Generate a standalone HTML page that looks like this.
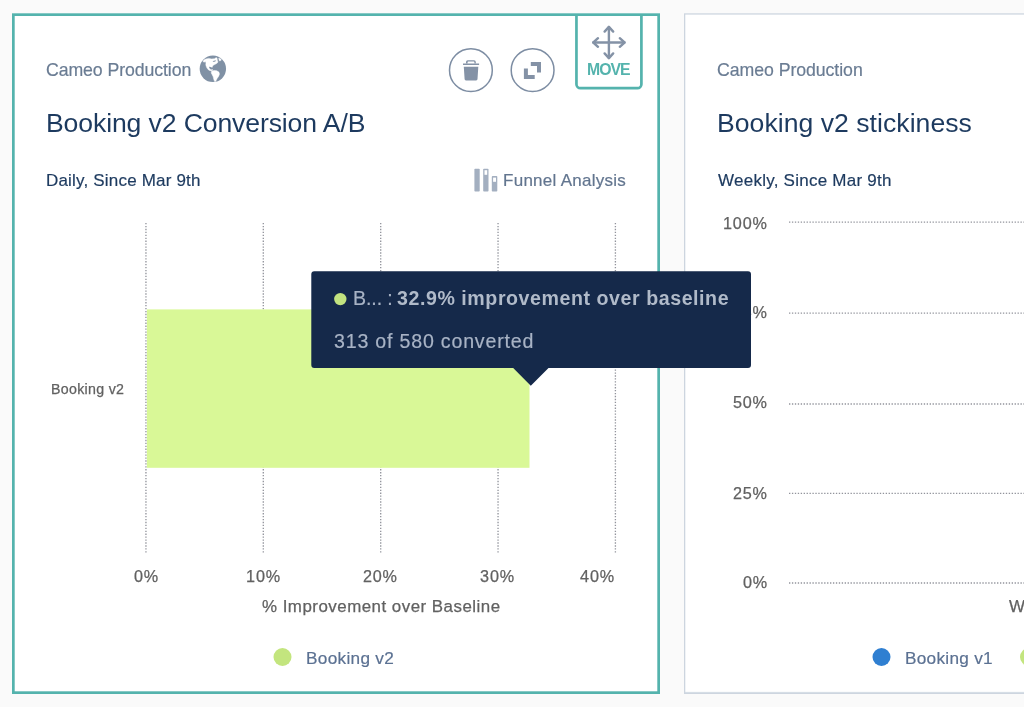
<!DOCTYPE html>
<html><head><meta charset="utf-8">
<style>
html,body{margin:0;padding:0;}
body{width:1024px;height:707px;overflow:hidden;background:#fafafa;position:relative;font-family:"Liberation Sans",sans-serif;}
.abs{position:absolute;white-space:nowrap;line-height:1;will-change:transform;}
#card1{position:absolute;left:12px;top:13.3px;width:648px;height:680.7px;background:#fff;}
#card2{position:absolute;left:684px;top:13.3px;width:400px;height:680.5px;background:#fff;}
.slate{color:#66788f;}
.navy{color:#1d3a5f;}
.tick{color:#5f5f5f;}
.xt{font-size:16px;transform:translateX(-50%);}
.yt{font-size:16px;right:258px;}
</style></head><body>
<div id="card1"></div>
<div id="card2"></div>



<div class="abs" id="t_cameo1" style="left:45.51px;top:62.4px;font-size:17.7px;letter-spacing:-0.08px;color:#6a7c93;-webkit-text-stroke:0.2px #6a7c93;">Cameo Production</div>
<div class="abs" id="t_title1" style="left:45.91px;top:109.8px;font-size:26.6px;letter-spacing:-0.12px;color:#1d3a5f;">Booking v2 Conversion A/B</div>
<div class="abs" id="t_daily" style="left:46.21px;top:171.9px;font-size:17.0px;letter-spacing:0.19px;color:#1d3a5f;-webkit-text-stroke:0.2px #1d3a5f;">Daily, Since Mar 9th</div>
<div class="abs" id="t_funnel" style="left:503.11px;top:172px;font-size:17.0px;letter-spacing:0.27px;color:#62758f;-webkit-text-stroke:0.2px #62758f;">Funnel Analysis</div>
<div class="abs" id="t_cameo2" style="left:717.36px;top:62.3px;font-size:17.7px;letter-spacing:-0.05px;color:#6a7c93;-webkit-text-stroke:0.2px #6a7c93;">Cameo Production</div>
<div class="abs" id="t_title2" style="left:717.31px;top:109.8px;font-size:26.6px;letter-spacing:0.03px;color:#1d3a5f;">Booking v2 stickiness</div>
<div class="abs" id="t_weekly" style="left:717.9px;top:171.9px;font-size:17.0px;letter-spacing:0.25px;color:#1d3a5f;-webkit-text-stroke:0.2px #1d3a5f;">Weekly, Since Mar 9th</div>
<div class="abs" id="t_ylab" style="left:51.23px;top:382.06px;font-size:14.2px;letter-spacing:0.31px;color:#616161;-webkit-text-stroke:0.25px #616161;">Booking v2</div>
<div class="abs" id="t_x0" style="left:134.41px;top:568.23px;font-size:16.2px;letter-spacing:0.72px;color:#616161;-webkit-text-stroke:0.25px #616161;">0%</div>
<div class="abs" id="t_x1" style="left:245.98px;top:568.23px;font-size:16.2px;letter-spacing:0.93px;color:#616161;-webkit-text-stroke:0.25px #616161;">10%</div>
<div class="abs" id="t_x2" style="left:363.17px;top:568.23px;font-size:16.2px;letter-spacing:0.78px;color:#616161;-webkit-text-stroke:0.25px #616161;">20%</div>
<div class="abs" id="t_x3" style="left:480.07px;top:568.23px;font-size:16.2px;letter-spacing:0.93px;color:#616161;-webkit-text-stroke:0.25px #616161;">30%</div>
<div class="abs" id="t_x4" style="left:580.35px;top:568.23px;font-size:16.2px;letter-spacing:0.89px;color:#616161;-webkit-text-stroke:0.25px #616161;">40%</div>
<div class="abs" id="t_xtitle" style="left:261.91px;top:599.25px;font-size:16.9px;letter-spacing:0.49px;color:#616161;-webkit-text-stroke:0.25px #616161;">% Improvement over Baseline</div>
<div class="abs" id="t_leg1" style="left:306.29px;top:650.2px;font-size:17.2px;letter-spacing:0.31px;color:#5b7192;-webkit-text-stroke:0.2px #5b7192;">Booking v2</div>
<div class="abs" id="t_leg2" style="left:905.19px;top:650.4px;font-size:17.2px;letter-spacing:0.29px;color:#5b7192;-webkit-text-stroke:0.2px #5b7192;">Booking v1</div>
<div class="abs" id="t_y100" style="left:722.88px;top:214.73px;font-size:16.2px;letter-spacing:0.85px;color:#616161;-webkit-text-stroke:0.25px #616161;">100%</div>
<div class="abs" id="t_y75" style="left:732.88px;top:304.03px;font-size:16.2px;letter-spacing:0.78px;color:#616161;-webkit-text-stroke:0.25px #616161;">75%</div>
<div class="abs" id="t_y50" style="left:732.84px;top:393.53px;font-size:16.2px;letter-spacing:0.8px;color:#616161;-webkit-text-stroke:0.25px #616161;">50%</div>
<div class="abs" id="t_y25" style="left:732.87px;top:484.63px;font-size:16.2px;letter-spacing:0.78px;color:#616161;-webkit-text-stroke:0.25px #616161;">25%</div>
<div class="abs" id="t_y0" style="left:742.71px;top:574.03px;font-size:16.2px;letter-spacing:0.72px;color:#616161;-webkit-text-stroke:0.25px #616161;">0%</div>
<div class="abs" id="t_w" style="left:1009.01px;top:598.75px;font-size:16.9px;letter-spacing:0px;color:#616161;-webkit-text-stroke:0.25px #616161;">Weeks</div>
<svg id="gfx" class="abs" style="left:0;top:0" width="1024" height="707" viewBox="0 0 1024 707">
<!-- card borders -->
<rect x="684.65" y="13.95" width="400" height="679.4" fill="none" stroke="#cdd5df" stroke-width="1.3"/>
<path d="M685 692.4 H1024" stroke="#cdd5df" stroke-width="0.8" fill="none"/>
<!-- move tab -->
<path d="M576.45 14 V84.2 a4 4 0 0 0 4 4 H637.4 a4 4 0 0 0 4 -4 V14" fill="#fff" stroke="#54b3ad" stroke-width="2.7"/>
<rect x="13.35" y="14.65" width="645.3" height="678" fill="none" stroke="#54b3ad" stroke-width="2.7"/>
<!-- move icon -->
<g stroke="#8492a6" stroke-width="2.4" fill="none" stroke-linecap="round" stroke-linejoin="round">
<path d="M593.3 42.5 H624.5 M608.9 26.9 V58.1"/>
<path d="M604.6 31.6 L608.9 26.9 L613.2 31.6 M604.6 53.4 L608.9 58.1 L613.2 53.4 M598 38.2 L593.3 42.5 L598 46.8 M619.8 38.2 L624.5 42.5 L619.8 46.8"/>
</g>
<!-- trash button -->
<circle cx="470.9" cy="70.2" r="21.4" fill="#fff" stroke="#7d8da3" stroke-width="1.5"/>
<g fill="#8492a6">
<path d="M463.8 66.7 H478.3 L477.5 79 a1.4 1.4 0 0 1 -1.4 1.4 H466 a1.4 1.4 0 0 1 -1.4 -1.4 Z"/>
<rect x="463" y="63.5" width="16.1" height="1.5"/>
<path d="M466 63.5 V62 a1.8 1.8 0 0 1 1.8 -1.8 H474 a1.8 1.8 0 0 1 1.8 1.8 V63.5 H474.4 V62.2 a0.6 0.6 0 0 0 -0.6 -0.6 H468.2 a0.6 0.6 0 0 0 -0.6 0.6 V63.5 Z"/>
</g>
<!-- expand button -->
<circle cx="532.6" cy="70.2" r="21.4" fill="#fff" stroke="#7d8da3" stroke-width="1.5"/>
<g fill="#8492a6">
<path d="M530.8 61.9 H541 V72.6 H537 V66 H530.8 Z"/>
<path d="M523.9 68.5 H527.9 V74.9 H534.7 V79 H523.9 Z"/>
</g>
<!-- globe -->
<circle cx="212.85" cy="68.8" r="13.2" fill="#8091a5"/>
<g transform="translate(193 48) scale(0.056577)" fill="#fff" stroke="#fff" stroke-width="8" stroke-linejoin="round">
<path d="M178 240 L192 212 L225 196 L275 184 L330 193 L380 190 L410 170 L426 180 L430 215 L440 245 L430 265 L400 285 L365 300 L346 320 L340 345 L350 364 L330 360 L302 345 L286 354 L300 374 L325 386 L338 378 L352 388 L330 402 L300 400 L266 380 L242 346 L226 300 L229 262 L216 240 L196 250 Z"/>
<path d="M328 412 L370 396 L420 402 L458 426 L468 460 L454 500 L426 540 L402 588 L384 594 L368 558 L357 510 L337 470 L322 440 Z"/>
<path d="M454 180 L476 184 L502 208 L484 226 L468 228 L460 206 Z"/>
</g>
<path d="M212.6 61.2 q1.8 -1 3.6 -0.6 q-0.3 1 -1.8 1.2 q-1.2 0.2 -1.8 -0.6 Z" fill="#8091a5"/>
<path d="M208.9 66.9 q1.2 -0.5 2.2 0.3 q1 0.5 2.4 0.3 l0.2 1.3 q-1.8 0.6 -3 -0.1 q-1.2 -0.7 -1.8 -1.8 Z" fill="#8091a5"/>
<!-- funnel icon -->
<g fill="#a3afc0">
<rect x="474.4" y="168.7" width="5.3" height="22.9" rx="0.8"/>
<rect x="483.2" y="168.7" width="5.3" height="22.9" rx="0.8"/>
<rect x="491.8" y="176.1" width="5.5" height="15.5" rx="0.8"/>
</g>
<rect x="484.5" y="170.2" width="2.7" height="4.6" fill="#fff"/>
<rect x="493.1" y="177.6" width="2.9" height="4.2" fill="#fff"/>

<!-- chart 1 grid -->
<g stroke="#92949c" stroke-width="1.33" stroke-dasharray="1.33 1.6" fill="none">
<path d="M145.95 223 V553 M263.3 223 V553 M380.7 223 V553 M498.05 223 V553 M615.4 223 V553"/>
</g>
<rect x="146.9" y="309.4" width="382.6" height="158.4" fill="#d9f897"/>

<!-- legend dots -->
<circle cx="282.5" cy="657" r="9" fill="#c3e57e"/>
<circle cx="881.5" cy="657" r="9" fill="#2f7fd1"/>
<circle cx="1029" cy="657" r="9" fill="#c3e57e"/>

<!-- chart 2 grid -->
<g stroke="#92949c" stroke-width="1.33" stroke-dasharray="1.33 1.6" fill="none">
<path d="M789 222.1 H1024 M789 313.1 H1024 M789 404 H1024 M789 493.4 H1024 M789 583 H1024"/>
</g>

<!-- tooltip -->
<path d="M314.3 271.2 H748 a3 3 0 0 1 3 3 V364.9 a3 3 0 0 1 -3 3 H548.5 L530.8 385.7 L513.2 367.9 H314.3 a3 3 0 0 1 -3 -3 V274.2 a3 3 0 0 1 3 -3 Z" fill="#15294a"/>
<circle cx="340.3" cy="299.1" r="6.2" fill="#c2e380"/>
</svg>
<div class="abs" id="t_move" style="left:586.9px;top:61.6px;font-size:15.8px;letter-spacing:-0.98px;color:#54b3ad;font-weight:bold;">MOVE</div>
<div class="abs" id="t_tipa" style="left:352.52px;top:289.4px;font-size:19.6px;letter-spacing:-0.11px;color:#a8b3c5;-webkit-text-stroke:0.2px #a8b3c5;">B... :</div>
<div class="abs" id="t_tipb" style="left:396.67px;top:289.4px;font-size:19.6px;letter-spacing:0.56px;color:#b0bac9;font-weight:bold;">32.9% improvement over baseline</div>
<div class="abs" id="t_tip2" style="left:333.96px;top:331.5px;font-size:19.6px;letter-spacing:0.8px;color:#a8b3c5;-webkit-text-stroke:0.2px #a8b3c5;">313 of 580 converted</div>

</body></html>
